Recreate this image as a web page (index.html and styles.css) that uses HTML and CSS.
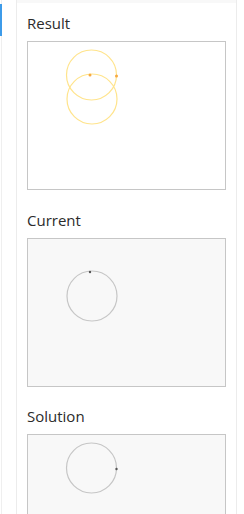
FILE: index.html
```html
<!DOCTYPE html>
<html>
<head>
<meta charset="utf-8">
<link rel="stylesheet" href="styles.css">
</head>
<body>
<div class="app">
  <aside class="rail">
    <div class="rail-line"><div class="rail-active"></div></div>
  </aside>
  <main class="main">
    <div class="topband"></div>
    <div class="content">
      <section class="panel">
        <h2 class="title">Result</h2>
        <div class="box box-white">
          <svg class="canvas" width="197" height="147" viewBox="0 0 197 147">
            <circle cx="63.5" cy="33" r="25" fill="none" stroke="#ffe48c" stroke-width="1.2"/>
            <circle cx="64" cy="57" r="25" fill="none" stroke="#ffe48c" stroke-width="1.2"/>
            <circle cx="62" cy="33" r="1.5" fill="#f7a93f"/>
            <circle cx="88.5" cy="34" r="1.5" fill="#f7a93f"/>
          </svg>
        </div>
      </section>
      <section class="panel">
        <h2 class="title">Current</h2>
        <div class="box box-grey">
          <svg class="canvas" width="197" height="147" viewBox="0 0 197 147">
            <circle cx="64" cy="57" r="25" fill="none" stroke="#c6c6c6" stroke-width="1.2"/>
            <circle cx="62" cy="33" r="1.2" fill="#555"/>
          </svg>
        </div>
      </section>
      <section class="panel">
        <h2 class="title">Solution</h2>
        <div class="box box-grey">
          <svg class="canvas" width="197" height="147" viewBox="0 0 197 147">
            <circle cx="63.5" cy="33" r="25" fill="none" stroke="#c6c6c6" stroke-width="1.2"/>
            <circle cx="88.5" cy="34" r="1.2" fill="#555"/>
          </svg>
        </div>
      </section>
    </div>
  </main>
</div>
</body>
</html>
```

FILE: styles.css
```css
html, body {
  margin: 0;
  padding: 0;
  background: #ffffff;
  font-family: "Open Sans", "Noto Sans", sans-serif;
  color: #333333;
}
.app {
  display: flex;
  width: 244px;
  height: 514px;
  overflow: hidden;
}
.rail {
  width: 16px;
  border-right: 1px solid #ececec;
  flex: none;
}
.rail-line {
  width: 2px;
  height: 100%;
  border-right: 1px solid #efefef;
  padding-top: 4px;
  box-sizing: border-box;
}
.rail-active {
  width: 2px;
  height: 32px;
  background: #3d9be9;
}
.main {
  width: 219px;
  border-right: 1px solid #ececec;
  flex: none;
}
.topband {
  height: 3px;
  background: #f8f8f8;
}
.content {
  padding: 10px 10px 0 10px;
  display: flex;
  flex-direction: column;
  gap: 20px;
}
.panel {
  display: flex;
  flex-direction: column;
  gap: 8px;
}
.panel + .panel {
  margin-top: -0.5px;
}
.title {
  margin: 0;
  font-size: 15px;
  line-height: 20px;
  font-weight: 400;
  color: #2b2b2b;
}
.box {
  width: 199px;
  height: 149px;
  box-sizing: border-box;
  border: 1px solid #c6c6c6;
  flex: none;
}
.box-white {
  background: #ffffff;
}
.box-grey {
  background: #f8f8f8;
}
.canvas {
  display: block;
}
```
